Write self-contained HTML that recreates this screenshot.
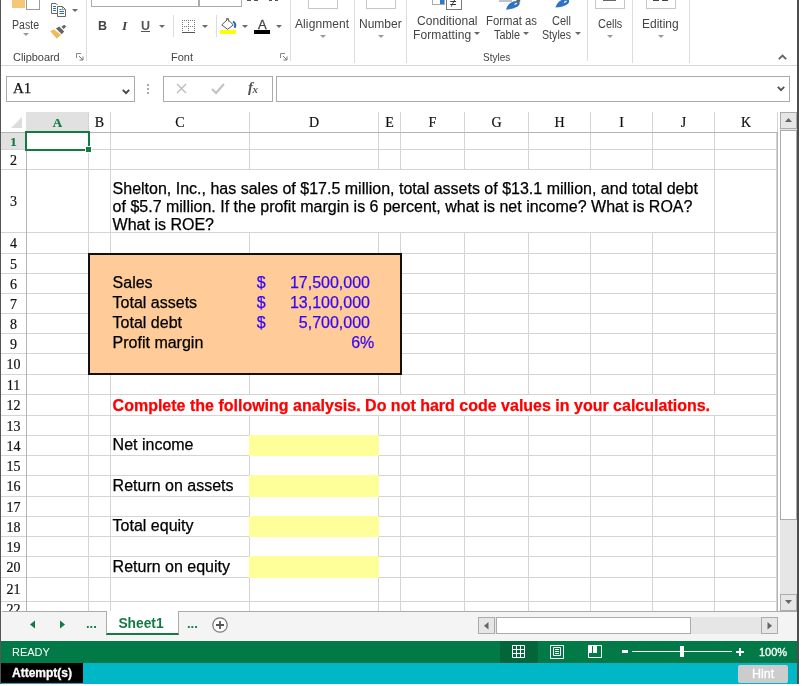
<!DOCTYPE html>
<html><head><meta charset="utf-8">
<style>
*{box-sizing:border-box;margin:0;padding:0}
html,body{width:803px;height:686px;overflow:hidden;background:#fff}
body{position:relative;font-family:"Liberation Sans",sans-serif;color:#444}
.abs{position:absolute}
svg{position:absolute;overflow:visible}
#frame{position:absolute;left:0;top:0;width:799px;height:684px;overflow:hidden;will-change:transform}
#lb{position:absolute;left:0;top:0;width:1px;height:684px;background:#555}
#rb{position:absolute;left:797px;top:0;width:2px;height:684px;background:#504c4e}
.rt{position:absolute;font-size:12px;color:#444;white-space:nowrap;line-height:14px}
.gl{position:absolute;font-size:11px;color:#444;white-space:nowrap;line-height:13px}
.vsep{position:absolute;width:1px;background:#dcdcdc}
.hl{position:absolute;height:1px;background:#d4d4d4}
.vl{position:absolute;width:1px;background:#d4d4d4}
.ch{-webkit-text-stroke:0.2px currentColor;position:absolute;top:0;height:20px;font-family:"Liberation Serif",serif;font-size:14px;color:#111;text-align:center;line-height:22px}
.rh{-webkit-text-stroke:0.2px currentColor;position:absolute;left:1px;width:25px;font-family:"Liberation Serif",serif;font-size:14px;color:#111;text-align:center;line-height:16px;height:16px}
.ct{position:absolute;font-size:16px;color:#000;white-space:nowrap;line-height:18px;-webkit-text-stroke:0.25px currentColor}
.bl{color:#3608f5}
.yl{position:absolute;left:249px;width:130px;background:#ffff99}
.box{position:absolute;border:1px solid #ababab;background:#fff}
.rbx{position:absolute;border:1px solid #c6c6c6;background:#fff}
.dd{position:absolute;width:0;height:0;border-left:3px solid transparent;border-right:3px solid transparent;border-top:3px solid #6a6a6a}
.dd.lt{border-top-color:#999}
.sd{position:absolute;width:0;height:0;border-left:3px solid transparent;border-right:3px solid transparent;border-top:3px solid #666;margin-left:-0.5px}
</style></head><body>
<div id="frame">

<div id="ribbon" class="abs" style="left:0;top:0;width:799px;height:66px">
<div class="abs" style="left:12px;top:-3px;width:13px;height:11px;background:#f3c877"></div>
<div class="abs" style="left:26px;top:-3px;width:14px;height:13px;background:#fff;border:1px solid #9a9a9a"></div>
<svg style="left:51px;top:3px" width="16" height="15" viewBox="0 0 16 15"><path d="M6.500 10.500H0.500V0.500H5l1.500 1.500" fill="none" stroke="#666" stroke-width="1"/><path d="M6.500 3.500h5l3 3v7h-8z" fill="#fff" stroke="#666" stroke-width="1"/><path d="M11.500 3.500v3h3" fill="none" stroke="#777" stroke-width="0.800"/><path d="M2 3.500h3M2 5.500h3M2 7.500h3M8.500 6.500h2M8.500 8.500h4.500M8.500 10.500h4.500" stroke="#2b6cb5" stroke-width="1"/></svg>
<div class="dd" style="left:72px;top:9px"></div>
<div class="rt" style="left:11.5px;top:18px;transform:scaleX(0.88);transform-origin:0 50%">Paste</div>
<div class="dd lt" style="left:23px;top:33px"></div>
<svg style="left:50px;top:24px" width="18" height="15" viewBox="0 0 18 15"><path d="M0.100 7.100L4.300 5.500 11 10.900 6.800 14.800z" fill="#f0b95a"/><path d="M5.900 4.500L9.300 2.400 14.200 7.600 11.800 10.300z" fill="#666"/><path d="M11.400 2.700L14.200 0.800 16.300 2.600 13.600 5z" fill="#666"/></svg>
<div class="gl" style="left:13px;top:51px;letter-spacing:-0.05px">Clipboard</div>
<svg style="left:76px;top:53px" width="8" height="8" viewBox="0 0 8 8"><path d="M0.5 5V0.5H5" fill="none" stroke="#888"/><path d="M3 3l4 4M7 3.5V7H3.5" fill="none" stroke="#777"/></svg>
<div class="vsep" style="left:86px;top:0;height:61px"></div>
<div class="rbx" style="left:91px;top:-10px;width:108px;height:17px;border-color:#ababab"></div>
<div class="rbx" style="left:199px;top:-10px;width:43px;height:17px;border-color:#ababab"></div>
<div class="abs" style="left:247px;top:0;width:4px;height:1px;background:#555"></div><div class="abs" style="left:254px;top:0;width:4px;height:1px;background:#555"></div>
<div class="abs" style="left:269px;top:0;width:3px;height:1px;background:#555"></div><div class="abs" style="left:275px;top:0;width:3px;height:1px;background:#555"></div>
<div class="rt" style="left:98px;top:19px;font-weight:bold;font-size:12.5px">B</div>
<div class="rt" style="left:122px;top:19px;font-style:italic;font-weight:bold;font-size:13.5px;font-family:'Liberation Serif',serif">I</div>
<div class="rt" style="left:141px;top:19px;font-weight:bold;text-decoration:underline;font-size:12.5px;color:#555">U</div>
<div class="dd" style="left:159px;top:25px"></div>
<div class="vsep" style="left:173px;top:15px;height:22px"></div>
<svg style="left:182px;top:20px" width="13" height="13" viewBox="0 0 13 13"><path d="M0 0.5h13M0 6.5h13M0.5 0v12M6.5 0v12M12.5 0v12" fill="none" stroke="#777" stroke-dasharray="1 1"/><path d="M0 12.5h13" stroke="#555"/></svg>
<div class="dd" style="left:202px;top:25px"></div>
<div class="vsep" style="left:216px;top:15px;height:22px"></div>
<svg style="left:220px;top:17px" width="17" height="17" viewBox="0 0 17 17"><path d="M1.800 7.900L7.600 2.300 13.300 7.900 7.600 12.300z" fill="#fff" stroke="#555" stroke-width="1"/><path d="M6.500 4V1.500h2V4.500" fill="none" stroke="#666" stroke-width="0.900"/><path d="M13 4.500c2 1.200 2.800 3.800 1.600 6.300" fill="none" stroke="#2b62b4" stroke-width="2"/><rect x="0" y="13" width="16" height="4" fill="#ffff00"/></svg>
<div class="dd" style="left:242px;top:25px"></div>
<div class="rt" style="left:258px;top:18px;font-size:13px;color:#444;-webkit-text-stroke:0.3px #444">A</div>
<div class="abs" style="left:254px;top:30px;width:16px;height:4px;background:#000"></div>
<div class="dd" style="left:276px;top:25px"></div>
<div class="gl" style="left:171px;top:51px">Font</div>
<svg style="left:280px;top:53px" width="8" height="8" viewBox="0 0 8 8"><path d="M0.5 5V0.5H5" fill="none" stroke="#888"/><path d="M3 3l4 4M7 3.5V7H3.5" fill="none" stroke="#777"/></svg>
<div class="vsep" style="left:290px;top:0;height:61px"></div>
<div class="rbx" style="left:308px;top:-10px;width:30px;height:19px"></div>
<div class="rt" style="left:295px;top:17px;letter-spacing:0.1px">Alignment</div>
<div class="dd lt" style="left:320px;top:35px"></div>
<div class="vsep" style="left:354px;top:0;height:63px"></div>
<div class="rbx" style="left:366px;top:-10px;width:30px;height:19px"></div>
<div class="rt" style="left:359px;top:17px">Number</div>
<div class="dd lt" style="left:378px;top:35px"></div>
<div class="vsep" style="left:406px;top:0;height:63px"></div>
<div class="rbx" style="left:432px;top:-3px;width:13px;height:8px;border-color:#aaa"></div>
<div class="abs" style="left:440px;top:-3px;width:4px;height:7px;background:#3079c6"></div>
<div class="rbx" style="left:446px;top:-3px;width:16px;height:13px;border-color:#777"></div>
<div class="rt" style="left:450px;top:-4px;font-size:12px;color:#333">≠</div>
<svg style="left:499px;top:0" width="24" height="10" viewBox="0 0 24 10"><path d="M0 0h13v2H0z" fill="#b8c4d4"/><path d="M7 9.5c1.5-5 5-8.5 11-8.5 3.5 0 3.500 3.500 0.500 5.500-3 2-7.500 3-11.500 3z" fill="#2f74c4"/><path d="M15.500 4.500l2.500-1.500" stroke="#fff" stroke-width="1.2"/><path d="M17 0l4 0 0.500 1.500-3 1z" fill="#666"/></svg>
<svg style="left:549px;top:-2px" width="23" height="10" viewBox="0 0 23 10"><path d="M0 0h9v2H0z" fill="#bbb"/><path d="M6.500 9.500c1.500-5 5-8.500 11-8.500 3.500 0 3.500 3.500 0.500 5.500-3 2-7.500 3-11.500 3z" fill="#2f74c4"/><path d="M15 4.500l2.500-1.500" stroke="#fff" stroke-width="1.200"/></svg>
<div class="rt" style="left:417px;top:14px;letter-spacing:0.05px">Conditional</div>
<div class="rt" style="left:413px;top:28px;letter-spacing:0.1px">Formatting</div>
<div class="sd" style="left:474px;top:32px"></div>
<div class="rt" style="left:486px;top:14px;transform:scaleX(0.944);transform-origin:0 50%">Format as</div>
<div class="rt" style="left:493.5px;top:28px;transform:scaleX(0.906);transform-origin:0 50%">Table</div>
<div class="sd" style="left:523.5px;top:32px"></div>
<div class="rt" style="left:552px;top:14px;transform:scaleX(0.918);transform-origin:0 50%">Cell</div>
<div class="rt" style="left:541.5px;top:28px;transform:scaleX(0.887);transform-origin:0 50%">Styles</div>
<div class="sd" style="left:575px;top:32px"></div>
<div class="gl" style="left:483px;top:51px;transform:scaleX(0.907);transform-origin:0 50%">Styles</div>
<div class="vsep" style="left:587px;top:0;height:61px"></div>
<div class="rbx" style="left:595px;top:-10px;width:30px;height:19px"></div>
<div class="abs" style="left:603px;top:0;width:13px;height:1px;background:#666"></div>
<div class="rt" style="left:597.5px;top:17px;transform:scaleX(0.91);transform-origin:0 50%">Cells</div>
<div class="dd lt" style="left:607px;top:35px"></div>
<div class="vsep" style="left:632px;top:0;height:63px"></div>
<div class="rbx" style="left:646px;top:-10px;width:30px;height:19px"></div>
<div class="abs" style="left:653px;top:0;width:6px;height:1px;background:#444"></div><div class="abs" style="left:662px;top:0;width:6px;height:1px;background:#444"></div>
<div class="rt" style="left:642px;top:17px">Editing</div>
<div class="dd lt" style="left:658px;top:35px"></div>
<div class="vsep" style="left:689px;top:0;height:63px"></div>
<svg style="left:778px;top:54px" width="9" height="6" viewBox="0 0 9 6"><path d="M0.800 5.200l3.700-3.700 3.700 3.700" fill="none" stroke="#666" stroke-width="1.900"/></svg>
</div>
<div class="hl" style="left:1px;top:65px;width:796px;background:#d6d6d6"></div>
<div id="fbar" class="abs" style="left:0;top:66px;width:799px;height:46px">
<div class="box" style="left:6px;top:10px;width:129px;height:26px"></div>
<div class="abs" style="left:13px;top:13px;font-family:'Liberation Serif',serif;font-size:15px;color:#111;line-height:19px;-webkit-text-stroke:0.25px #111">A1</div>
<svg style="left:121.500px;top:23px" width="8" height="6" viewBox="0 0 8 6"><path d="M0.800 0.800l3.200 3.400L7.200 0.800" fill="none" stroke="#444" stroke-width="1.900"/></svg>
<div class="abs" style="left:147px;top:18px;width:2px;height:2px;background:#aaa"></div><div class="abs" style="left:147px;top:22px;width:2px;height:2px;background:#aaa"></div><div class="abs" style="left:147px;top:26px;width:2px;height:2px;background:#aaa"></div>
<div class="box" style="left:163px;top:10px;width:110px;height:26px"></div>
<svg style="left:176px;top:17px" width="11" height="11" viewBox="0 0 11 11"><path d="M1 1l9 9M10 1l-9 9" fill="none" stroke="#bcbcbc" stroke-width="1.400"/></svg>
<svg style="left:211px;top:17px" width="14" height="11" viewBox="0 0 14 11"><path d="M1 6l4 4 8-9" fill="none" stroke="#c0c0c0" stroke-width="2"/></svg>
<div class="abs" style="left:248px;top:12px;font-family:'Liberation Serif',serif;font-style:italic;font-weight:bold;font-size:15px;color:#555;line-height:18px;letter-spacing:-0.5px">f<span style="font-size:11px;position:relative;top:1px">x</span></div>
<div class="box" style="left:276px;top:10px;width:514px;height:26px"></div>
<svg style="left:776.500px;top:20px" width="8" height="6" viewBox="0 0 8 6"><path d="M0.800 0.800l3.200 3.400L7.200 0.800" fill="none" stroke="#555" stroke-width="1.900"/></svg>
</div>
<div id="grid" class="abs" style="left:0;top:112px;width:778px;height:499px;background:#fff;overflow:hidden">
<div class="abs" style="left:26px;top:0;width:62px;height:20px;background:#e1e1e1"></div>
<div class="abs" style="left:1px;top:21px;width:25px;height:16px;background:#e1e1e1"></div>
<svg style="left:11px;top:5px" width="11" height="11" viewBox="0 0 11 11"><path d="M11 0v11H0z" fill="#dcdcdc"/></svg>
<div class="hl" style="left:1px;top:37px;width:777px"></div>
<div class="hl" style="left:1px;top:57px;width:777px"></div>
<div class="hl" style="left:1px;top:120px;width:777px"></div>
<div class="hl" style="left:1px;top:141px;width:777px"></div>
<div class="hl" style="left:1px;top:161px;width:777px"></div>
<div class="hl" style="left:1px;top:181px;width:777px"></div>
<div class="hl" style="left:1px;top:201px;width:777px"></div>
<div class="hl" style="left:1px;top:221px;width:777px"></div>
<div class="hl" style="left:1px;top:241px;width:777px"></div>
<div class="hl" style="left:1px;top:262px;width:777px"></div>
<div class="hl" style="left:1px;top:282px;width:777px"></div>
<div class="hl" style="left:1px;top:303px;width:777px"></div>
<div class="hl" style="left:1px;top:323px;width:777px"></div>
<div class="hl" style="left:1px;top:343px;width:777px"></div>
<div class="hl" style="left:1px;top:363px;width:777px"></div>
<div class="hl" style="left:1px;top:384px;width:777px"></div>
<div class="hl" style="left:1px;top:404px;width:777px"></div>
<div class="hl" style="left:1px;top:424px;width:777px"></div>
<div class="hl" style="left:1px;top:444px;width:777px"></div>
<div class="hl" style="left:1px;top:465px;width:777px"></div>
<div class="hl" style="left:1px;top:489px;width:777px"></div>
<div class="hl" style="left:1px;top:510px;width:777px"></div>
<div class="vl" style="left:26px;top:20px;height:479px;background:#b4b4b4"></div>
<div class="vl" style="left:88px;top:0;height:499px"></div>
<div class="vl" style="left:110px;top:0;height:499px"></div>
<div class="vl" style="left:249px;top:0;height:499px"></div>
<div class="vl" style="left:378px;top:0;height:499px"></div>
<div class="vl" style="left:400px;top:0;height:499px"></div>
<div class="vl" style="left:464px;top:0;height:499px"></div>
<div class="vl" style="left:528px;top:0;height:499px"></div>
<div class="vl" style="left:590px;top:0;height:499px"></div>
<div class="vl" style="left:652px;top:0;height:499px"></div>
<div class="vl" style="left:714px;top:0;height:499px"></div>
<div class="vl" style="left:777px;top:0;height:499px"></div>
<div class="vl" style="left:776px;top:20px;height:479px"></div>
<div class="vl" style="left:777px;top:20px;height:479px;background:#b4b4b4"></div>
<div class="hl" style="left:1px;top:20px;width:777px;background:#b4b4b4"></div>
<div class="ch" style="left:27px;width:61px;color:#137a43;font-weight:bold;font-size:13px">A</div>
<div class="ch" style="left:89px;width:21px">B</div>
<div class="ch" style="left:111px;width:138px">C</div>
<div class="ch" style="left:250px;width:128px">D</div>
<div class="ch" style="left:379px;width:21px">E</div>
<div class="ch" style="left:401px;width:63px">F</div>
<div class="ch" style="left:465px;width:63px">G</div>
<div class="ch" style="left:529px;width:61px">H</div>
<div class="ch" style="left:591px;width:61px">I</div>
<div class="ch" style="left:653px;width:61px">J</div>
<div class="ch" style="left:715px;width:62px">K</div>
<div class="rh" style="top:22.0px;color:#137a43;font-weight:bold;font-size:13px">1</div>
<div class="rh" style="top:40.5px">2</div>
<div class="rh" style="top:82.0px">3</div>
<div class="rh" style="top:124.0px">4</div>
<div class="rh" style="top:144.5px">5</div>
<div class="rh" style="top:164.5px">6</div>
<div class="rh" style="top:184.5px">7</div>
<div class="rh" style="top:204.5px">8</div>
<div class="rh" style="top:224.5px">9</div>
<div class="rh" style="top:245.0px">10</div>
<div class="rh" style="top:265.5px">11</div>
<div class="rh" style="top:286.0px">12</div>
<div class="rh" style="top:306.5px">13</div>
<div class="rh" style="top:326.5px">14</div>
<div class="rh" style="top:346.5px">15</div>
<div class="rh" style="top:367.0px">16</div>
<div class="rh" style="top:387.5px">17</div>
<div class="rh" style="top:407.5px">18</div>
<div class="rh" style="top:427.5px">19</div>
<div class="rh" style="top:448.0px">20</div>
<div class="rh" style="top:470.0px">21</div>
<div class="rh" style="top:490.0px">22</div>
<div class="abs" style="left:111px;top:58px;width:603px;height:62px;background:#fff"></div>
<div class="ct" style="left:112.6px;top:68px">Shelton, Inc., has sales of $17.5 million, total assets of $13.1 million, and total debt</div>
<div class="ct" style="left:112.6px;top:86px">of $5.7 million. If the profit margin is 6 percent, what is net income? What is ROA?</div>
<div class="ct" style="left:112.6px;top:104px">What is ROE?</div>
<div class="abs" style="left:88px;top:141px;width:314px;height:122px;background:#ffcc99;border:2px solid #111"></div>
<div class="ct" style="left:112.6px;top:162px">Sales</div>
<div class="ct bl" style="left:256.700px;top:162px">$</div>
<div class="ct bl" style="left:250px;width:120px;text-align:right;top:162px">17,500,000</div>
<div class="ct" style="left:112.6px;top:182px">Total assets</div>
<div class="ct bl" style="left:256.700px;top:182px">$</div>
<div class="ct bl" style="left:250px;width:120px;text-align:right;top:182px">13,100,000</div>
<div class="ct" style="left:112.6px;top:202px">Total debt</div>
<div class="ct bl" style="left:256.700px;top:202px">$</div>
<div class="ct bl" style="left:250px;width:120px;text-align:right;top:202px">5,700,000</div>
<div class="ct" style="left:112.6px;top:222px">Profit margin</div>
<div class="ct bl" style="left:250px;width:124.300px;text-align:right;top:222px">6%</div>
<div class="abs" style="left:111px;top:283px;width:665px;height:20px;background:#fff"></div>
<div class="ct" style="left:112.6px;top:285px;color:#ff0000;font-weight:bold">Complete the following analysis. Do not hard code values in your calculations.</div>
<div class="yl" style="top:323px;height:21px"></div>
<div class="ct" style="left:112.6px;top:324px">Net income</div>
<div class="yl" style="top:363px;height:22px"></div>
<div class="ct" style="left:112.6px;top:365px">Return on assets</div>
<div class="yl" style="top:404px;height:21px"></div>
<div class="ct" style="left:112.6px;top:405px">Total equity</div>
<div class="yl" style="top:444px;height:22px"></div>
<div class="ct" style="left:112.6px;top:446px">Return on equity</div>
<div class="abs" style="left:25px;top:19px;width:65px;height:20px;border:2px solid #137a43"></div>
<div class="abs" style="left:85px;top:34px;width:7px;height:7px;background:#fff"></div>
<div class="abs" style="left:86px;top:35px;width:5px;height:5px;background:#137a43"></div>
</div>
<div class="abs" style="left:780px;top:112px;width:17px;height:499px;background:#e6e6e6"></div>
<div class="abs" style="left:780px;top:112px;width:17px;height:17px;background:#e6e6e6;border:1px solid #ababab"></div>
<div class="abs" style="left:780px;top:594px;width:17px;height:17px;background:#e6e6e6;border:1px solid #ababab"></div>
<div class="abs" style="left:780px;top:130px;width:17px;height:390px;background:#fff;border:1px solid #ababab"></div>
<svg style="left:785px;top:118px" width="7" height="4" viewBox="0 0 7 4"><path d="M0 4L3.500 0 7 4z" fill="#666"/></svg>
<svg style="left:785px;top:600px" width="7" height="4" viewBox="0 0 7 4"><path d="M0 0L3.500 4 7 0z" fill="#666"/></svg>
<div id="tabs" class="abs" style="left:2px;top:611px;width:795px;height:31px;background:#f4f4f4;box-shadow:-1px 0 0 #f4f4f4">
<div class="hl" style="left:0;top:0;width:795px;background:#ababab"></div>
<svg style="left:28px;top:9px" width="5" height="9" viewBox="0 0 5 9"><path d="M5 0.500v8L0 4.500z" fill="#137a43"/></svg>
<svg style="left:58px;top:9px" width="5" height="9" viewBox="0 0 5 9"><path d="M0 0.500v8L5 4.500z" fill="#137a43"/></svg>
<div class="abs" style="left:84px;top:4px;font-size:13px;font-weight:bold;color:#137a43;line-height:18px">...</div>
<div class="abs" style="left:104px;top:0;width:73px;height:24px;background:#fff;border-left:1px solid #ababab;border-right:1px solid #ababab;border-bottom:2px solid #137a43"></div>
<div class="abs" style="left:102.5px;top:4px;width:73px;text-align:center;font-size:13.8px;font-weight:bold;color:#137a43;line-height:18px">Sheet1</div>
<div class="abs" style="left:185px;top:4px;font-size:13px;font-weight:bold;color:#137a43;line-height:18px">...</div>
<svg style="left:210px;top:5.500px" width="16" height="16" viewBox="0 0 16 16"><circle cx="8" cy="8" r="7.200" fill="#fff" stroke="#777" stroke-width="1.200"/><path d="M8 4v8M4 8h8" stroke="#555" stroke-width="1.800"/></svg>
<div class="abs" style="left:476px;top:6px;width:300px;height:17px;background:#e6e6e6"></div>
<div class="abs" style="left:476px;top:6px;width:17px;height:17px;background:#e6e6e6;border:1px solid #ababab"></div>
<div class="abs" style="left:759px;top:6px;width:17px;height:17px;background:#e6e6e6;border:1px solid #ababab"></div>
<div class="abs" style="left:494px;top:6px;width:195px;height:17px;background:#fff;border:1px solid #ababab"></div>
<svg style="left:482px;top:11px" width="5" height="8" viewBox="0 0 5 8"><path d="M4.500 0v7.500L0 3.750z" fill="#666"/></svg>
<svg style="left:765px;top:11px" width="5" height="8" viewBox="0 0 5 8"><path d="M0.500 0v7.500L5 3.750z" fill="#666"/></svg>
</div>
<div id="status" class="abs" style="left:2px;top:641px;width:795px;height:22px;background:#027a48;box-shadow:-1px 0 0 #027a48">
<div class="abs" style="left:10px;top:4px;font-size:11px;color:#fff;line-height:14px">READY</div>
<div class="abs" style="left:498px;top:0;width:38px;height:22px;background:#04653a"></div>
<svg style="left:510px;top:4px" width="13" height="13" viewBox="0 0 13 13"><path d="M0.500 0.500h12v12h-12zM0.500 4.500h12M0.500 8.500h12M4.500 0.500v12M8.500 0.500v12" fill="none" stroke="#fff" stroke-width="1"/></svg>
<svg style="left:548px;top:4px" width="14" height="14" viewBox="0 0 14 14"><path d="M0.500 0.500h13v13h-13z" fill="none" stroke="#fff"/><path d="M3.500 2.500h7v8h-7zM5 4.500h4M5 6.500h4M5 8.500h4" fill="none" stroke="#fff"/></svg>
<svg style="left:586px;top:4px" width="14" height="13" viewBox="0 0 14 13"><path d="M0.500 0.500h13v12h-13z" fill="none" stroke="#fff"/><path d="M1 1h3v7h-3zM5 1h4v7h-4z" fill="#fff"/></svg>
<div class="abs" style="left:620px;top:9px;width:6px;height:3px;background:#fff"></div>
<div class="abs" style="left:630px;top:10px;width:100px;height:1px;background:#fff"></div>
<div class="abs" style="left:678px;top:5px;width:4px;height:11px;background:#fff"></div>
<div class="abs" style="left:734px;top:10px;width:8px;height:2px;background:#fff"></div><div class="abs" style="left:737px;top:7px;width:2px;height:8px;background:#fff"></div>
<div class="abs" style="left:757px;top:4px;font-size:11px;color:#fff;line-height:14px;-webkit-text-stroke:0.3px #fff">100%</div>
</div>
<div id="teal" class="abs" style="left:2px;top:663px;width:795px;height:21px;background:#00b7c8;box-shadow:-1px 0 0 #00b7c8">
<div class="abs" style="left:-1px;top:0;width:82px;height:20px;background:#000"></div>
<div class="abs" style="left:10px;top:3px;font-size:12px;font-weight:bold;color:#fff;line-height:15px;-webkit-text-stroke:0.3px #fff">Attempt(s)</div>
<div class="abs" style="left:736px;top:2px;width:50px;height:18px;background:#ccc;border-radius:2px"></div>
<div class="abs" style="left:736px;top:3px;width:50px;text-align:center;font-size:12.500px;color:#fff;line-height:16px;-webkit-text-stroke:0.3px #fff">Hint</div>
</div>
</div>
<div id="lb"></div><div id="rb"></div>
</body></html>
